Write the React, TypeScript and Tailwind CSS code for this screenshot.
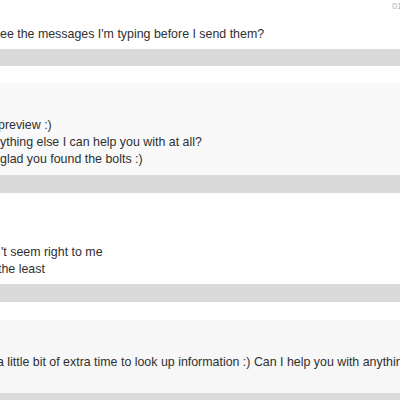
export default function App() {
  return (
    <div className="w-[400px] h-[400px] overflow-hidden bg-white font-['Liberation_Sans',Arial,sans-serif] text-[12.4px] leading-[17px] text-[#2f2f2f] whitespace-nowrap">
      {/* message 1 */}
      <div className="h-[49px] flex flex-col">
        <div className="h-[12px] pl-[392px] text-[9px] leading-[12px] text-[#b8b8b8] overflow-hidden">01:42 PM</div>
        <div className="pt-[14px]">ee the messages I'm typing before I send them?</div>
      </div>
      <div className="h-[17px] bg-[#dadada]" />

      {/* message 2 */}
      <div className="h-[109px] flex flex-col">
        <div className="h-[17px] bg-white" />
        <div className="flex-1 bg-[#f9f9f9] pt-[34px] flex flex-col">
          <div className="-ml-[2px]">preview :)</div>
          <div>ything else I can help you with at all?</div>
          <div>glad you found the bolts :)</div>
        </div>
      </div>
      <div className="h-[18px] bg-[#dadada]" />

      {/* message 3 */}
      <div className="h-[91px] bg-white pt-[51px] flex flex-col">
        <div className="pl-[1px]">'t seem right to me</div>
        <div className="-ml-[2px]">the least</div>
      </div>
      <div className="h-[18px] bg-[#dadada]" />

      {/* message 4 */}
      <div className="h-[91px] flex flex-col">
        <div className="h-[18px] bg-white" />
        <div className="flex-1 bg-[#f7f7f7] pt-[34px]">
          <div className="-ml-[3px]">a little bit of extra time to look up information :) Can I help you with anything else?</div>
        </div>
      </div>
      <div className="h-[20px] bg-[#dadada]" />
    </div>
  );
}
